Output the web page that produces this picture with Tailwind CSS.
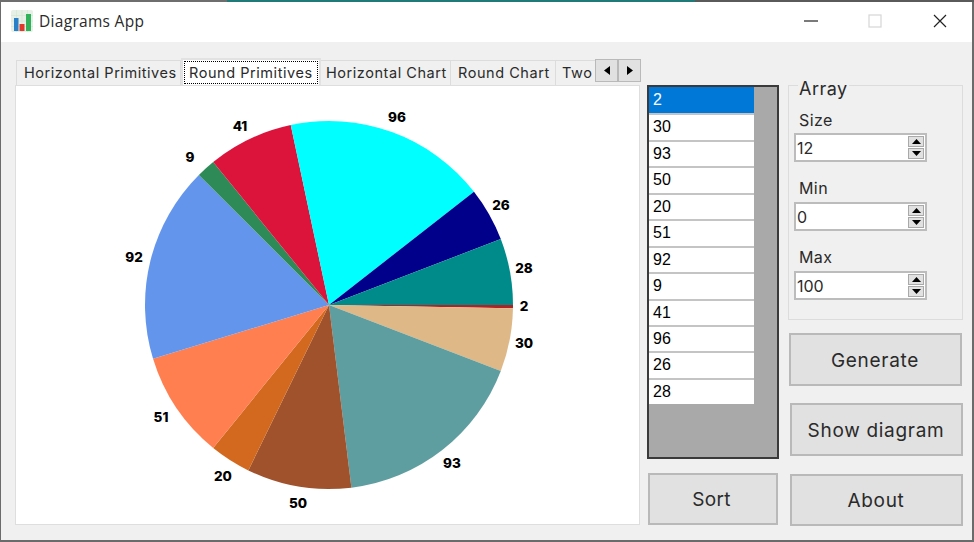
<!DOCTYPE html>
<html lang="en">
<head>
    <meta charset="UTF-8">
    <title>Diagrams App</title>
    <script src="https://cdn.jsdelivr.net/npm/@tailwindcss/browser@4"></script>
</head>
<body class="bg-[#4a4a4a] overflow-hidden">
    <div class="w-[974px] h-[542px] pl-[1px] pr-[2px] pb-[2px] bg-[#6b6b6b] font-['Inter',sans-serif] text-[#2a2a2a]">
        <!-- Desktop showing above the window -->
        <div class="h-[2px] flex -ml-[1px] -mr-[2px]">
            <div class="w-[227px] bg-[#6e6e6e]"></div>
            <div class="w-[468px] bg-[#1f7a78]"></div>
            <div class="flex-1 bg-[#5a5a5a]"></div>
        </div>

        <!-- Title bar -->
        <div class="h-[40px] bg-white flex items-center">
            <svg class="ml-[10px] mb-[2px] w-[22px] h-[22px]" viewBox="0 0 22 22">
                <rect x="0" y="0" width="22" height="22" rx="2" fill="#e6f0e6"/>
                <path d="M0 5.5h22M0 11h22M0 16.5h22M5.5 0v22M11 0v22M16.5 0v22" stroke="#d3e4d3" stroke-width="0.6"/>
                <rect x="3" y="8" width="4.5" height="13" fill="#2a7fc9"/>
                <rect x="8.5" y="14" width="5" height="7" fill="#e0392b"/>
                <rect x="15" y="4" width="5" height="17" fill="#2fb25a"/>
            </svg>
            <span class="ml-[6px] mb-[1px] text-[15.5px] tracking-[0.3px] font-['Open_Sans',sans-serif]">Diagrams App</span>
            <div class="ml-auto mb-[2px] flex items-center">
                <svg class="w-[16px] h-[16px]" viewBox="0 0 16 16"><path d="M1 8h14" stroke="#222" stroke-width="1.2"/></svg>
                <svg class="ml-[49px] w-[14px] h-[14px]" viewBox="0 0 14 14"><rect x="1" y="1" width="12" height="12" fill="none" stroke="#d6d6d6" stroke-width="1.2"/></svg>
                <svg class="ml-[50px] mr-[24px] w-[16px] h-[16px]" viewBox="0 0 16 16"><path d="M2 2l12 12M14 2L2 14" stroke="#222" stroke-width="1.2"/></svg>
            </div>
        </div>

        <div class="h-[498px] bg-[#f0f0f0] flex pl-[14px]">
            <!-- Tabs + chart -->
            <div class="w-[627px] pt-[16px] shrink-0">
                <div class="h-[27px] flex items-end text-[14.5px] tracking-[0.55px] whitespace-nowrap">
                    <div class="w-[165px] h-[25px] ml-[1px] border border-b-0 border-[#dcdcdc] bg-[#f0f0f0] flex items-center pl-[7px]">Horizontal Primitives</div>
                    <div class="w-[140px] h-[27px] border-2 border-b-0 border-[#e2e2e2] bg-white flex items-start pt-[1px] pl-[1px]">
                        <span class="w-[134px] h-[23px] border border-dotted border-black flex items-center pl-[4px]">Round Primitives</span>
                    </div>
                    <div class="w-[130px] h-[25px] border-r border-t border-[#dcdcdc] flex items-center pl-[5px]">Horizontal Chart</div>
                    <div class="w-[105px] h-[25px] border-r border-t border-[#dcdcdc] flex items-center pl-[7px]">Round Chart</div>
                    <div class="w-[39px] h-[25px] border-t border-[#dcdcdc] flex items-center pl-[6px] overflow-hidden">Two</div>
                    <div class="w-[46px] h-[23px] mb-[3px] flex border border-[#b9b9b9]">
                        <div class="flex-1 bg-[#e1e1e1] border-r-2 border-[#b9b9b9] flex items-center justify-center">
                            <svg class="w-[6px] h-[9px]" viewBox="0 0 6 9"><path d="M6 0v9L0 4.5z" fill="#000"/></svg>
                        </div>
                        <div class="flex-1 bg-[#e1e1e1] flex items-center justify-center">
                            <svg class="w-[6px] h-[9px]" viewBox="0 0 6 9"><path d="M0 0v9l6-4.5z" fill="#000"/></svg>
                        </div>
                    </div>
                </div>
                <div class="w-[625px] h-[440px] bg-white border border-[#dedede]">
                    <svg id="pie" class="block" width="623" height="438" viewBox="16 86 623 438"></svg>
                </div>
            </div>

            <!-- List + sort -->
            <div class="ml-[5px] w-[132px] pt-[43px] shrink-0">
                <div id="list" class="h-[374px] bg-[#a9a9a9] border-2 border-[#3a3a3a]"></div>
                <button class="block ml-[1px] mt-[14px] pt-[3px] pr-[3px] w-[130px] h-[52px] bg-[#e1e1e1] border-2 border-[#b9b9b9] text-[19px] tracking-[0.3px]">Sort</button>
            </div>

            <!-- Array group + buttons -->
            <div class="ml-[9px] w-[175px] pt-[43px] shrink-0">
                <div class="relative h-[235px] border border-[#dcdcdc] pl-[5px]">
                    <span class="absolute left-[9px] -top-[7px] px-[1px] bg-[#f0f0f0] leading-[20px] text-[18px] tracking-[0.5px]">Array</span>
                    <div class="pt-[22px] flex flex-col">
                        <div class="h-[24px] pl-[5px] leading-[24px] text-[16px] tracking-[0.4px]">Size</div>
                        <div class="mt-[1px] w-[133px] h-[29px] bg-white border-2 border-[#bcbcbc] flex items-center pl-[1px] text-[16px]">
                            <span class="flex-1">12</span>
                            <div class="w-[16px] mr-[1px] flex flex-col gap-[1px]">
                                <div class="h-[11px] bg-[#e1e1e1] border border-[#a9a9a9] flex items-center justify-center"><svg class="w-[9px] h-[5px]" viewBox="0 0 9 5"><path d="M0 5h9L4.5 0z" fill="#000"/></svg></div>
                                <div class="h-[11px] bg-[#e1e1e1] border border-[#a9a9a9] flex items-center justify-center"><svg class="w-[9px] h-[5px]" viewBox="0 0 9 5"><path d="M0 0h9L4.5 5z" fill="#000"/></svg></div>
                            </div>
                        </div>
                        <div class="mt-[15px] h-[24px] pl-[5px] leading-[22px] text-[16px] tracking-[0.4px]">Min</div>
                        <div class="mt-[1px] w-[133px] h-[29px] bg-white border-2 border-[#bcbcbc] flex items-center pl-[1px] text-[16px]">
                            <span class="flex-1">0</span>
                            <div class="w-[16px] mr-[1px] flex flex-col gap-[1px]">
                                <div class="h-[11px] bg-[#e1e1e1] border border-[#a9a9a9] flex items-center justify-center"><svg class="w-[9px] h-[5px]" viewBox="0 0 9 5"><path d="M0 5h9L4.5 0z" fill="#000"/></svg></div>
                                <div class="h-[11px] bg-[#e1e1e1] border border-[#a9a9a9] flex items-center justify-center"><svg class="w-[9px] h-[5px]" viewBox="0 0 9 5"><path d="M0 0h9L4.5 5z" fill="#000"/></svg></div>
                            </div>
                        </div>
                        <div class="mt-[15px] h-[24px] pl-[5px] leading-[22px] text-[16px] tracking-[0.4px]">Max</div>
                        <div class="mt-[1px] w-[133px] h-[29px] bg-white border-2 border-[#bcbcbc] flex items-center pl-[1px] text-[16px]">
                            <span class="flex-1">100</span>
                            <div class="w-[16px] mr-[1px] flex flex-col gap-[1px]">
                                <div class="h-[11px] bg-[#e1e1e1] border border-[#a9a9a9] flex items-center justify-center"><svg class="w-[9px] h-[5px]" viewBox="0 0 9 5"><path d="M0 5h9L4.5 0z" fill="#000"/></svg></div>
                                <div class="h-[11px] bg-[#e1e1e1] border border-[#a9a9a9] flex items-center justify-center"><svg class="w-[9px] h-[5px]" viewBox="0 0 9 5"><path d="M0 0h9L4.5 5z" fill="#000"/></svg></div>
                            </div>
                        </div>
                    </div>
                </div>
                <button class="block ml-[1px] mt-[13px] pt-[3px] pr-[1px] w-[173px] h-[53px] bg-[#e1e1e1] border-2 border-[#b9b9b9] text-[19px] tracking-[0.7px]">Generate</button>
                <button class="block ml-[2px] mt-[17px] pt-[3px] pr-[1px] w-[173px] h-[53px] bg-[#e1e1e1] border-2 border-[#b9b9b9] text-[19px] tracking-[0.7px]">Show diagram</button>
                <button class="block ml-[2px] mt-[18px] pt-[3px] pr-[1px] w-[173px] h-[52px] bg-[#e1e1e1] border-2 border-[#b9b9b9] text-[19px] tracking-[0.7px]">About</button>
            </div>
        </div>
    </div>

    <script>
        // value, colour, label position
        let slices = [
            { v: 2, c: "#b22222", x: 524, y: 306 },
            { v: 30, c: "#deb887", x: 524, y: 343 },
            { v: 93, c: "#5f9ea0", x: 452, y: 463 },
            { v: 50, c: "#a0522d", x: 298, y: 503 },
            { v: 20, c: "#d2691e", x: 223, y: 476 },
            { v: 51, c: "#ff7f50", x: 161, y: 417 },
            { v: 92, c: "#6495ed", x: 134, y: 257 },
            { v: 9, c: "#2e8b57", x: 190, y: 157 },
            { v: 41, c: "#dc143c", x: 240, y: 126 },
            { v: 96, c: "#00ffff", x: 397, y: 117 },
            { v: 26, c: "#00008b", x: 501, y: 205 },
            { v: 28, c: "#008b8b", x: 524, y: 268 }
        ];
        let total = slices.reduce((s, a) => s + a.v, 0);
        let cx = 329, cy = 305, r = 184;
        let deg = 0;
        let svg = "";
        // sweeps are whole degrees, the last slice closes the circle
        slices.forEach((s, i) => {
            let end = i === slices.length - 1 ? 360 : deg + Math.round(s.v / total * 360);
            let a0 = deg * Math.PI / 180, a1 = end * Math.PI / 180;
            let large = end - deg > 180 ? 1 : 0;
            svg += `<path d="M${cx} ${cy}L${cx + r * Math.cos(a0)} ${cy + r * Math.sin(a0)}A${r} ${r} 0 ${large} 1 ${cx + r * Math.cos(a1)} ${cy + r * Math.sin(a1)}Z" fill="${s.c}"/>`;
            deg = end;
        });
        slices.forEach(s => {
            svg += `<text x="${s.x}" y="${s.y + 5}" text-anchor="middle" font-size="13.5" font-weight="800" fill="#000">${s.v}</text>`;
        });
        document.getElementById("pie").innerHTML = svg;

        let list = document.getElementById("list");
        slices.forEach((s, i) => {
            let item = document.createElement("div");
            item.innerText = s.v;
            item.className = i === 0
                ? "w-[105px] h-[26.45px] bg-[#0078d7] text-white pl-[4px] leading-[25px] text-[16px] font-['Liberation_Sans',sans-serif]"
                : "w-[105px] h-[26.45px] bg-white border-t-2 border-[#c4c4c4] text-black pl-[4px] leading-[23px] text-[16px] font-['Liberation_Sans',sans-serif]";
            list.appendChild(item);
        });
    </script>
</body>
</html>
